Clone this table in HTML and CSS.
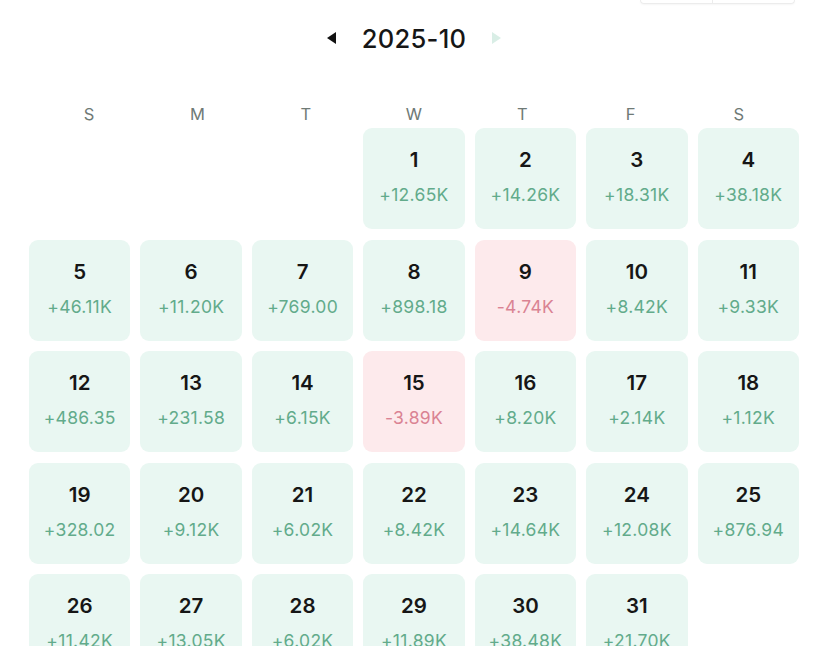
FILE: index.html
```html
<!DOCTYPE html>
<html>
<head>
<meta charset="utf-8">
<link rel="stylesheet" href="styles.css">
</head>
<body>
<div class="page">
  <div class="topbar"><div class="seg"><span class="seg-a"></span><span class="seg-b"></span></div></div>
  <div class="header">
    <span class="arrow arrow-left"></span>
    <span class="title">2025-10</span>
    <span class="arrow arrow-right"></span>
  </div>
  <div class="weekdays">
    <span>S</span><span>M</span><span>T</span><span>W</span><span>T</span><span>F</span><span>S</span>
  </div>
  <div class="grid">
    <div class="cell empty"></div>
    <div class="cell empty"></div>
    <div class="cell empty"></div>
    <div class="cell"><span class="day">1</span><span class="val">+12.65K</span></div>
    <div class="cell"><span class="day">2</span><span class="val">+14.26K</span></div>
    <div class="cell"><span class="day">3</span><span class="val">+18.31K</span></div>
    <div class="cell"><span class="day">4</span><span class="val">+38.18K</span></div>
    <div class="cell"><span class="day">5</span><span class="val">+46.11K</span></div>
    <div class="cell"><span class="day">6</span><span class="val">+11.20K</span></div>
    <div class="cell"><span class="day">7</span><span class="val">+769.00</span></div>
    <div class="cell"><span class="day">8</span><span class="val">+898.18</span></div>
    <div class="cell neg"><span class="day">9</span><span class="val">-4.74K</span></div>
    <div class="cell"><span class="day">10</span><span class="val">+8.42K</span></div>
    <div class="cell"><span class="day">11</span><span class="val">+9.33K</span></div>
    <div class="cell"><span class="day">12</span><span class="val">+486.35</span></div>
    <div class="cell"><span class="day">13</span><span class="val">+231.58</span></div>
    <div class="cell"><span class="day">14</span><span class="val">+6.15K</span></div>
    <div class="cell neg"><span class="day">15</span><span class="val">-3.89K</span></div>
    <div class="cell"><span class="day">16</span><span class="val">+8.20K</span></div>
    <div class="cell"><span class="day">17</span><span class="val">+2.14K</span></div>
    <div class="cell"><span class="day">18</span><span class="val">+1.12K</span></div>
    <div class="cell"><span class="day">19</span><span class="val">+328.02</span></div>
    <div class="cell"><span class="day">20</span><span class="val">+9.12K</span></div>
    <div class="cell"><span class="day">21</span><span class="val">+6.02K</span></div>
    <div class="cell"><span class="day">22</span><span class="val">+8.42K</span></div>
    <div class="cell"><span class="day">23</span><span class="val">+14.64K</span></div>
    <div class="cell"><span class="day">24</span><span class="val">+12.08K</span></div>
    <div class="cell"><span class="day">25</span><span class="val">+876.94</span></div>
    <div class="cell"><span class="day">26</span><span class="val">+11.42K</span></div>
    <div class="cell"><span class="day">27</span><span class="val">+13.05K</span></div>
    <div class="cell"><span class="day">28</span><span class="val">+6.02K</span></div>
    <div class="cell"><span class="day">29</span><span class="val">+11.89K</span></div>
    <div class="cell"><span class="day">30</span><span class="val">+38.48K</span></div>
    <div class="cell"><span class="day">31</span><span class="val">+21.70K</span></div>
  </div>
</div>
</body>
</html>
```
FILE: styles.css
```css
html, body {
  margin: 0;
  padding: 0;
  background: #ffffff;
  overflow: hidden;
}
body {
  font-family: Inter, "Open Sans", sans-serif;
  color: #1b1b1b;
  width: 829px;
  height: 646px;
}
.page {
  padding: 0 30px 0 29px;
}
.topbar {
  height: 4px;
  display: flex;
  justify-content: flex-end;
  padding-right: 4px;
}
.seg {
  width: 153px;
  height: 3px;
  display: flex;
  border: 1px solid #ececec;
  border-top: none;
  border-radius: 0 0 7px 7px;
  box-shadow: 0 1px 2px rgba(0,0,0,0.04);
}
.seg-a {
  width: 71px;
  border-right: 1px solid #ececec;
}
.seg-b {
  flex: 1;
}
.header {
  margin-top: 16px;
  height: 36px;
  display: flex;
  align-items: center;
  justify-content: center;
  gap: 26px;
}
.title {
  font-size: 25.5px;
  font-weight: 500;
  letter-spacing: 0.3px;
  color: #161616;
}
.arrow {
  width: 0;
  height: 0;
  border-top: 6px solid transparent;
  border-bottom: 6px solid transparent;
}
.arrow-left {
  border-right: 9px solid #111111;
}
.arrow-right {
  border-left: 9px solid #d9eee6;
}
.weekdays {
  width: 758px;
  margin: 48px auto 0;
  display: grid;
  grid-template-columns: repeat(7, 1fr);
  text-align: center;
  font-size: 16.5px;
  color: #6f7a76;
  height: 20px;
  line-height: 20px;
}
.grid {
  margin-top: 4px;
  display: grid;
  grid-template-columns: repeat(7, 1fr);
  grid-auto-rows: 101px;
  gap: 10.6px 10px;
}
.cell {
  background: #e9f7f2;
  border-radius: 9px;
  display: flex;
  flex-direction: column;
  align-items: center;
}
.cell.empty {
  background: transparent;
}
.cell.neg {
  background: #fdeaec;
}
.day {
  margin-top: 20px;
  font-size: 20.5px;
  font-weight: 600;
  line-height: 24px;
  color: #161616;
}
.val {
  margin-top: 13px;
  font-size: 17.5px;
  line-height: 20px;
  letter-spacing: 0.3px;
  color: #62ab8b;
}
.cell.neg .val {
  color: #da8393;
}
```
